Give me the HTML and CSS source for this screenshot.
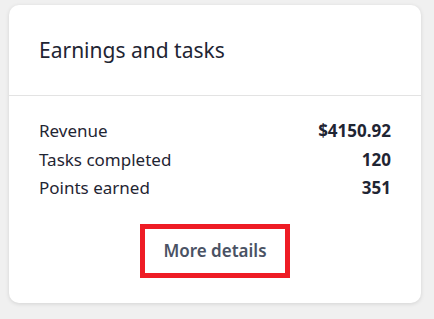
FILE: index.html
```html
<!DOCTYPE html>
<html>
<head>
<meta charset="utf-8">
<link rel="stylesheet" href="styles.css">
</head>
<body>
<div class="card">
  <div class="card-header">Earnings and tasks</div>
  <div class="card-body">
    <div class="row"><span class="label">Revenue</span><span class="value">$4150.92</span></div>
    <div class="row"><span class="label">Tasks completed</span><span class="value">120</span></div>
    <div class="row"><span class="label">Points earned</span><span class="value">351</span></div>
    <div class="actions"><button class="btn">More details</button></div>
  </div>
</div>
</body>
</html>
```
FILE: styles.css
```css
html, body { margin: 0; padding: 0; }
body {
  background: #f0f0f0;
  width: 434px;
  height: 319px;
  font-family: "Noto Sans", "Open Sans", sans-serif;
  color: #1f2533;
  padding: 5px 13px 0 9px;
  box-sizing: border-box;
}
.card {
  background: #fff;
  border-radius: 10px;
  box-shadow: 0 1px 4px rgba(0,0,0,0.12);
  height: 298px;
  display: flex;
  flex-direction: column;
}
.card-header {
  height: 90px;
  border-bottom: 1px solid #e3e3e3;
  display: flex;
  align-items: center;
  padding: 0 30px;
  font-size: 21px;
}
.card-body {
  padding: 21px 30px 0 30px;
}
.row {
  display: flex;
  justify-content: space-between;
  font-size: 17px;
  line-height: 28.5px;
}
.value { font-weight: 700; }
.actions {
  display: flex;
  justify-content: center;
  margin-top: 21px;
}
.btn {
  width: 150px;
  height: 54px;
  border: 5px solid #ee1c25;
  background: #fff;
  font-family: inherit;
  font-size: 17px;
  font-weight: 600;
  color: #4a5264;
  padding: 0;
}
```
